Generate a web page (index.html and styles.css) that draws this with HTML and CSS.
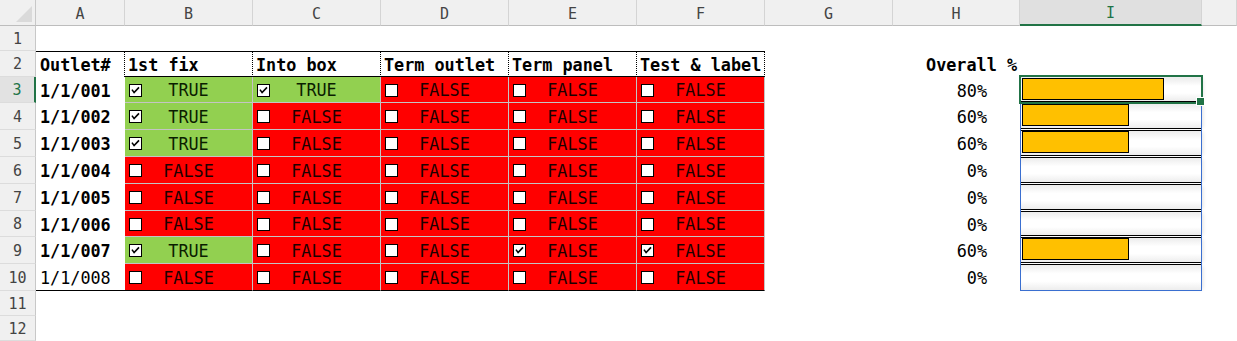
FILE: index.html
```html
<!DOCTYPE html>
<html>
  <head>
    <title>Outlet progress</title>
    <link rel="stylesheet" href="styles.css">
  </head>
  <body>
    <div class="sheet">
      <div class="row heads">
        <div class="corner"></div>
        <div class="ch">A</div>
        <div class="ch">B</div>
        <div class="ch">C</div>
        <div class="ch">D</div>
        <div class="ch">E</div>
        <div class="ch">F</div>
        <div class="ch">G</div>
        <div class="ch">H</div>
        <div class="ch sel">I</div>
        <div class="ch"></div>
      </div>

      <div class="row h25">
        <div class="rh">1</div>
        <div class="c"></div><div class="c"></div><div class="c"></div><div class="c"></div><div class="c"></div>
        <div class="c"></div><div class="c"></div><div class="c"></div><div class="c"></div><div class="c"></div>
      </div>

      <!-- column titles -->
      <div class="row h26">
        <div class="rh">2</div>
        <div class="c hd first b">Outlet#</div>
        <div class="c hd line b">1st fix</div>
        <div class="c hd line b">Into box</div>
        <div class="c hd line b">Term outlet</div>
        <div class="c hd line b">Term panel</div>
        <div class="c hd line b">Test &amp; label</div>
        <div class="c"></div>
        <div class="c total b">Overall %</div>
        <div class="c"></div>
        <div class="c"></div>
      </div>

      <div class="row h26">
        <div class="rh sel">3</div>
        <div class="c b">1/1/001</div>
        <div class="c t"><span class="cb"><svg viewBox="0 0 11 11"><path d="M2 4.6l2.1 3L9 2.4"/></svg></span>TRUE</div>
        <div class="c t"><span class="cb"><svg viewBox="0 0 11 11"><path d="M2 4.6l2.1 3L9 2.4"/></svg></span>TRUE</div>
        <div class="c f"><span class="cb"></span>FALSE</div>
        <div class="c f"><span class="cb"></span>FALSE</div>
        <div class="c f"><span class="cb"></span>FALSE</div>
        <div class="c"></div>
        <div class="c pct">80%</div>
        <div class="bar-cell current">
          <div class="meter"><div class="fill" style="width:80%"></div></div>
          <div class="cursor"></div>
        </div>
        <div class="c"></div>
      </div>

      <div class="row">
        <div class="rh">4</div>
        <div class="c b">1/1/002</div>
        <div class="c t"><span class="cb"><svg viewBox="0 0 11 11"><path d="M2 4.6l2.1 3L9 2.4"/></svg></span>TRUE</div>
        <div class="c f"><span class="cb"></span>FALSE</div>
        <div class="c f"><span class="cb"></span>FALSE</div>
        <div class="c f"><span class="cb"></span>FALSE</div>
        <div class="c f"><span class="cb"></span>FALSE</div>
        <div class="c"></div>
        <div class="c pct">60%</div>
        <div class="bar-cell"><div class="meter"><div class="fill" style="width:60%"></div></div></div>
        <div class="c"></div>
      </div>

      <div class="row">
        <div class="rh">5</div>
        <div class="c b">1/1/003</div>
        <div class="c t"><span class="cb"><svg viewBox="0 0 11 11"><path d="M2 4.6l2.1 3L9 2.4"/></svg></span>TRUE</div>
        <div class="c f"><span class="cb"></span>FALSE</div>
        <div class="c f"><span class="cb"></span>FALSE</div>
        <div class="c f"><span class="cb"></span>FALSE</div>
        <div class="c f"><span class="cb"></span>FALSE</div>
        <div class="c"></div>
        <div class="c pct">60%</div>
        <div class="bar-cell"><div class="meter"><div class="fill" style="width:60%"></div></div></div>
        <div class="c"></div>
      </div>

      <div class="row">
        <div class="rh">6</div>
        <div class="c b">1/1/004</div>
        <div class="c f"><span class="cb"></span>FALSE</div>
        <div class="c f"><span class="cb"></span>FALSE</div>
        <div class="c f"><span class="cb"></span>FALSE</div>
        <div class="c f"><span class="cb"></span>FALSE</div>
        <div class="c f"><span class="cb"></span>FALSE</div>
        <div class="c"></div>
        <div class="c pct">0%</div>
        <div class="bar-cell"><div class="meter"></div></div>
        <div class="c"></div>
      </div>

      <div class="row">
        <div class="rh">7</div>
        <div class="c b">1/1/005</div>
        <div class="c f"><span class="cb"></span>FALSE</div>
        <div class="c f"><span class="cb"></span>FALSE</div>
        <div class="c f"><span class="cb"></span>FALSE</div>
        <div class="c f"><span class="cb"></span>FALSE</div>
        <div class="c f"><span class="cb"></span>FALSE</div>
        <div class="c"></div>
        <div class="c pct">0%</div>
        <div class="bar-cell"><div class="meter"></div></div>
        <div class="c"></div>
      </div>

      <div class="row h26">
        <div class="rh">8</div>
        <div class="c b">1/1/006</div>
        <div class="c f"><span class="cb"></span>FALSE</div>
        <div class="c f"><span class="cb"></span>FALSE</div>
        <div class="c f"><span class="cb"></span>FALSE</div>
        <div class="c f"><span class="cb"></span>FALSE</div>
        <div class="c f"><span class="cb"></span>FALSE</div>
        <div class="c"></div>
        <div class="c pct">0%</div>
        <div class="bar-cell"><div class="meter"></div></div>
        <div class="c"></div>
      </div>

      <div class="row">
        <div class="rh">9</div>
        <div class="c b">1/1/007</div>
        <div class="c t"><span class="cb"><svg viewBox="0 0 11 11"><path d="M2 4.6l2.1 3L9 2.4"/></svg></span>TRUE</div>
        <div class="c f"><span class="cb"></span>FALSE</div>
        <div class="c f"><span class="cb"></span>FALSE</div>
        <div class="c f"><span class="cb"><svg viewBox="0 0 11 11"><path d="M2 4.6l2.1 3L9 2.4"/></svg></span>FALSE</div>
        <div class="c f"><span class="cb"><svg viewBox="0 0 11 11"><path d="M2 4.6l2.1 3L9 2.4"/></svg></span>FALSE</div>
        <div class="c"></div>
        <div class="c pct">60%</div>
        <div class="bar-cell"><div class="meter"><div class="fill" style="width:60%"></div></div></div>
        <div class="c"></div>
      </div>

      <div class="row last">
        <div class="rh">10</div>
        <div class="c">1/1/008</div>
        <div class="c f"><span class="cb"></span>FALSE</div>
        <div class="c f"><span class="cb"></span>FALSE</div>
        <div class="c f"><span class="cb"></span>FALSE</div>
        <div class="c f"><span class="cb"></span>FALSE</div>
        <div class="c f"><span class="cb"></span>FALSE</div>
        <div class="c"></div>
        <div class="c pct">0%</div>
        <div class="bar-cell end"><div class="meter"></div></div>
        <div class="c"></div>
      </div>

      <div class="row h25">
        <div class="rh">11</div>
        <div class="c"></div><div class="c"></div><div class="c"></div><div class="c"></div><div class="c"></div>
        <div class="c"></div><div class="c"></div><div class="c"></div><div class="c"></div><div class="c"></div>
      </div>

      <div class="row h25">
        <div class="rh">12</div>
        <div class="c"></div><div class="c"></div><div class="c"></div><div class="c"></div><div class="c"></div>
        <div class="c"></div><div class="c"></div><div class="c"></div><div class="c"></div><div class="c"></div>
      </div>
    </div>
  </body>
</html>
```

FILE: styles.css
```css
* {
  margin: 0;
  padding: 0;
  box-sizing: border-box;
}

body {
  background-color: #fff;
  font-family: "DejaVu Sans Mono", "Liberation Mono", monospace;
  font-size: 16.8px;
  color: #000;
  overflow: hidden;
}

.sheet {
  width: 1237px;
}

.row {
  display: grid;
  grid-template-columns: 36px 89px repeat(6, 128px) 127px 182px 1fr;
  height: 27px;
}
.row.h26 {
  height: 26px;
}
.row.h25 {
  height: 25px;
}

/* column letters */
.heads {
  height: 26px;
}
.corner {
  position: relative;
  background-color: #f0f0f0;
  border-right: 1px solid #c8c8c8;
  border-bottom: 1px solid #bdbdbd;
}
.corner::after {
  content: "";
  position: absolute;
  right: 3px;
  bottom: 3px;
  width: 16px;
  height: 16px;
  background-color: #dadada;
  clip-path: polygon(100% 0, 100% 100%, 0 100%);
}
.ch {
  display: flex;
  align-items: center;
  justify-content: center;
  padding-top: 2px;
  font-size: 15px;
  color: #444;
  background-color: #f0f0f0;
  border-right: 1px solid #d4d4d4;
  border-bottom: 1px solid #bdbdbd;
}
.ch.sel {
  background-color: #e0e0e0;
  color: #217346;
  border-bottom: 2px solid #217346;
}

/* row numbers */
.rh {
  display: flex;
  align-items: center;
  justify-content: center;
  padding-top: 1px;
  font-size: 15px;
  color: #444;
  background-color: #f0f0f0;
  border-right: 1px solid #c8c8c8;
  border-bottom: 1px solid #dcdcdc;
}
.rh.sel {
  background-color: #e2e2e2;
  color: #217346;
  border-right: 2px solid #217346;
}

/* cells */
.c {
  position: relative;
  display: flex;
  align-items: center;
  padding: 1px 4px 0;
  white-space: nowrap;
}
.b {
  font-weight: bold;
}
.hd {
  padding-left: 3px;
  border-top: 1px solid #000;
  border-right: 1px dotted #000;
}
.hd.first {
  padding-left: 4px;
}
.hd.line {
  border-bottom: 1px solid #000;
}
.total {
  justify-content: flex-end;
  padding-right: 3px;
}
.pct {
  justify-content: flex-end;
  padding-right: 33px;
}

.t,
.f {
  justify-content: center;
  border-right: 1px solid #c4c4c4;
  border-bottom: 1px solid #c4c4c4;
}
.t {
  background-color: #92d050;
  color: #0b1d00;
}
.f {
  background-color: #ff0000;
  color: #1c0000;
}
.last .c:nth-child(-n + 7) {
  border-bottom: 1px solid #000;
}

.cb {
  position: absolute;
  left: 4px;
  top: 50%;
  margin-top: -6px;
  width: 13px;
  height: 13px;
  background-color: #fff;
  border: 1px solid #000;
}
.cb svg {
  display: block;
  width: 11px;
  height: 11px;
}
.cb path {
  fill: none;
  stroke: #000;
  stroke-width: 1.6;
}

/* progress column */
.bar-cell {
  position: relative;
  padding-bottom: 1px;
  border-left: 1px solid #3a6fd0;
  border-right: 1px solid #3a6fd0;
  box-shadow: 3px 0 4px -2px rgba(0, 0, 0, 0.12);
}
.bar-cell.end {
  border-bottom: 1px solid #3a6fd0;
  padding-bottom: 0;
}
.meter {
  height: 100%;
  padding: 0 1px;
  border-top: 1px solid #000;
  border-bottom: 1px solid #000;
  background: linear-gradient(#ececec, #fff 35%, #fff 65%, #ededed);
}
.end .meter {
  border-bottom: none;
}
.current .meter {
  border-top-color: transparent;
}
.fill {
  height: 22px;
  background-color: #ffc000;
  border: 1px solid #000;
}

.cursor {
  position: absolute;
  left: -2px;
  top: -2px;
  width: 184px;
  height: 29px;
  border: 2px solid #217346;
  z-index: 2;
}
.cursor::after {
  content: "";
  position: absolute;
  right: -4px;
  bottom: -4px;
  width: 7px;
  height: 7px;
  background-color: #217346;
  border: 1px solid #fff;
}
```
